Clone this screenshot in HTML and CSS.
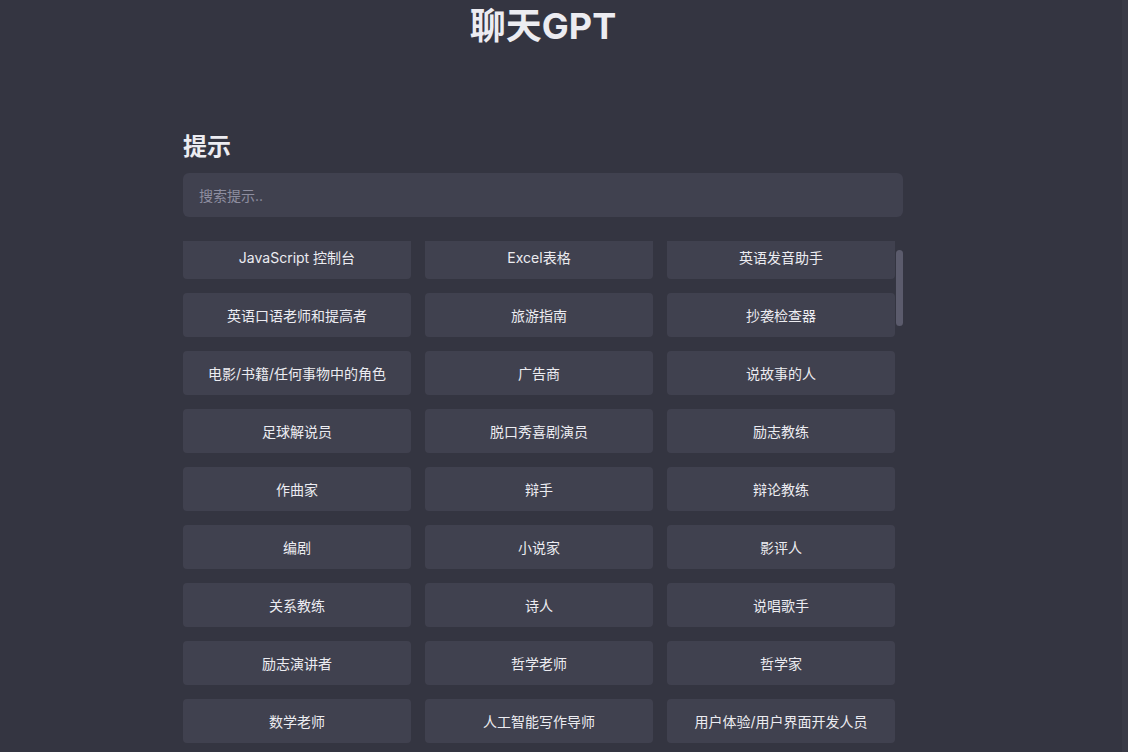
FILE: index.html
```html
<!DOCTYPE html>
<html lang="zh-CN">

<head>
    <meta charset="UTF-8">
    <meta name="viewport" content="width=device-width, initial-scale=1.0">
    <title>聊天GPT</title>
    <link rel="stylesheet" href="styles.css">
</head>

<body>
<div class="main">
    <h1 class="title">聊天GPT</h1>

    <div class="wrap">
        <h2 class="sub">提示</h2>
        <input type="text" class="search" placeholder="搜索提示..">

        <div class="list">
            <div class="grid">
                <button class="item">JavaScript 控制台</button>
                <button class="item">Excel表格</button>
                <button class="item">英语发音助手</button>
                <button class="item">英语口语老师和提高者</button>
                <button class="item">旅游指南</button>
                <button class="item">抄袭检查器</button>
                <button class="item">电影/书籍/任何事物中的角色</button>
                <button class="item">广告商</button>
                <button class="item">说故事的人</button>
                <button class="item">足球解说员</button>
                <button class="item">脱口秀喜剧演员</button>
                <button class="item">励志教练</button>
                <button class="item">作曲家</button>
                <button class="item">辩手</button>
                <button class="item">辩论教练</button>
                <button class="item">编剧</button>
                <button class="item">小说家</button>
                <button class="item">影评人</button>
                <button class="item">关系教练</button>
                <button class="item">诗人</button>
                <button class="item">说唱歌手</button>
                <button class="item">励志演讲者</button>
                <button class="item">哲学老师</button>
                <button class="item">哲学家</button>
                <button class="item">数学老师</button>
                <button class="item">人工智能写作导师</button>
                <button class="item">用户体验/用户界面开发人员</button>
            </div>
            <!-- 滚动条 -->
            <div class="thumb"></div>
        </div>
    </div>
</div>
</body>

</html>
```

FILE: styles.css
```css
* {
    padding: 0;
    margin: 0;
    box-sizing: border-box;
}

html,
body {
    height: 100%;
    overflow: hidden;
}

body {
    background-color: #343541;
    color: #ececf1;
    font-family: Inter, "Noto Sans CJK SC", sans-serif;
    border-right: 6px solid #393a46;
}

.main {
    width: calc(100% - 36px);
    height: 100%;
    display: flex;
    flex-direction: column;
}

.title {
    text-align: center;
    font-size: 36px;
    font-weight: 700;
    line-height: 52px;
    color: #ececf1;
}

.wrap {
    width: 720px;
    margin: 0 auto;
    padding-top: 79px;
    flex: 1;
    display: flex;
    flex-direction: column;
    min-height: 0;
}

.sub {
    font-size: 24px;
    font-weight: 700;
    line-height: 32px;
    margin-bottom: 10px;
}

.search {
    height: 44px;
    flex-shrink: 0;
    border: none;
    outline: none;
    border-radius: 6px;
    background-color: #40414f;
    padding: 0 16px;
    font: 14px Inter, "Noto Sans CJK SC", sans-serif;
    color: #ececf1;
}

.search::placeholder {
    color: #8e8ea0;
}

.list {
    position: relative;
    margin-top: 24px;
    flex: 1;
    overflow: hidden;
}

.grid {
    display: grid;
    grid-template-columns: repeat(3, 1fr);
    gap: 14px;
    padding-right: 8px;
    margin-top: -6px;
}

.item {
    height: 44px;
    border: none;
    border-radius: 4px;
    background-color: #40414f;
    color: #ececf1;
    font: 14px Inter, "Noto Sans CJK SC", sans-serif;
    cursor: pointer;
}

.item:hover {
    background-color: #4a4b59;
}

.thumb {
    position: absolute;
    top: 9px;
    right: 0;
    width: 7px;
    height: 76px;
    border-radius: 4px;
    background-color: #5b5b6c;
}
```
